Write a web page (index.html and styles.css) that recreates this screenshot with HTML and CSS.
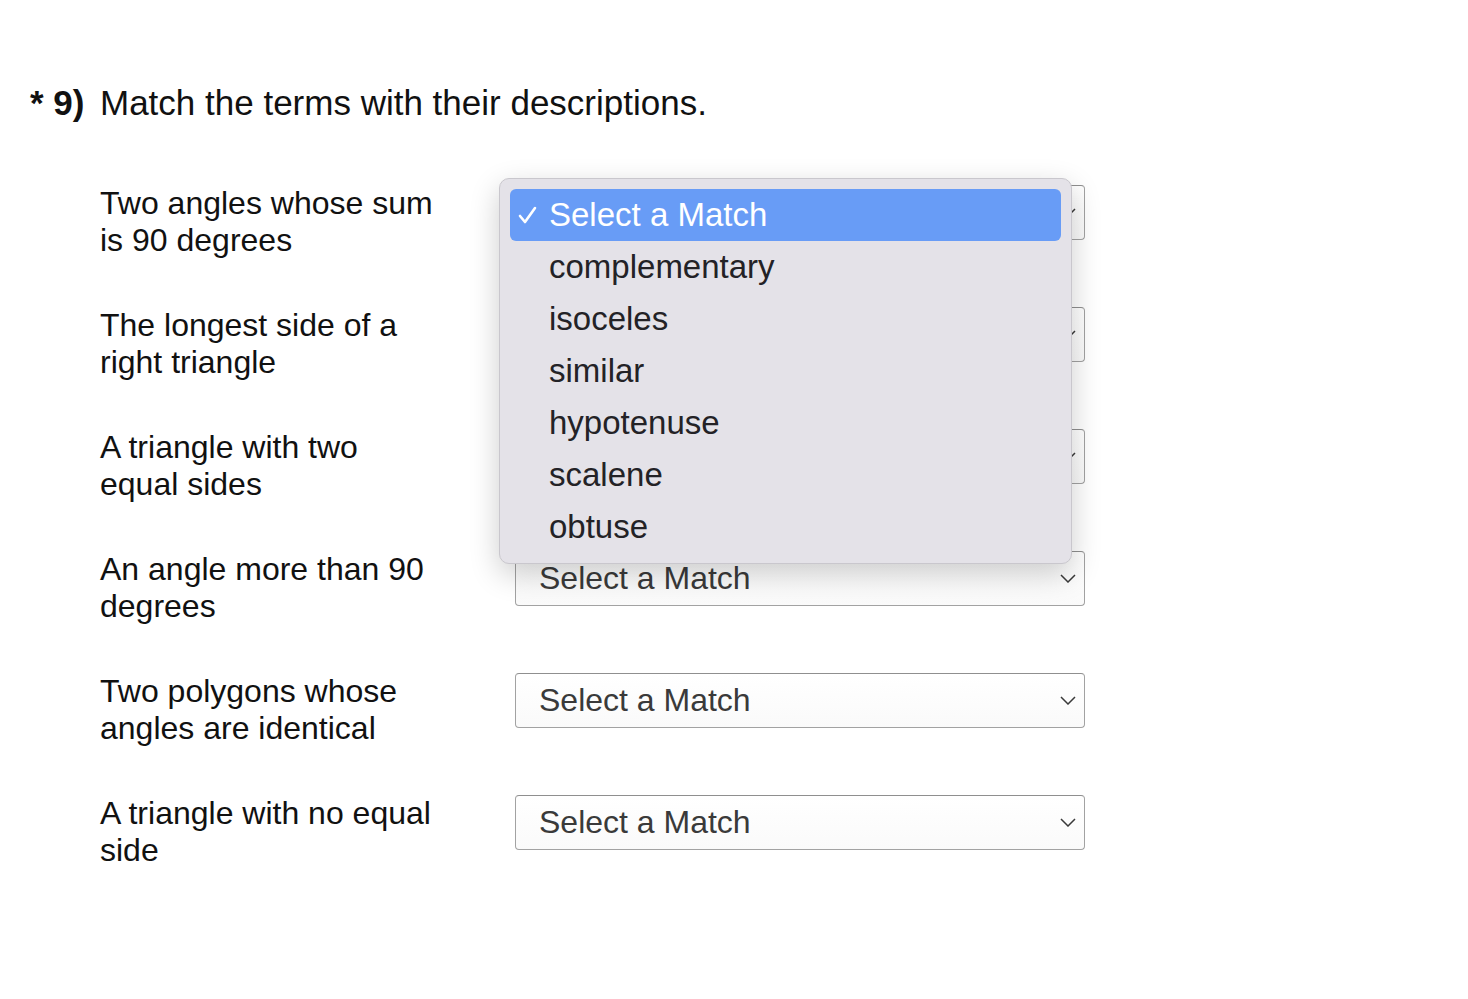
FILE: index.html
```html
<!DOCTYPE html>
<html lang="en">
<head>
  <meta charset="UTF-8">
  <title>Question 9</title>
  <link rel="stylesheet" href="styles.css">
</head>
<body>
  <div class="question">
    <h2 class="question-title">
      <span class="q-num">* 9)</span>
      <span>Match the terms with their descriptions.</span>
    </h2>

    <div class="matches">
      <div class="match-row">
        <div class="match-term">Two angles whose sum is 90 degrees</div>
        <div class="select-wrap">
          <div class="select">
            <span>Select a Match</span>
            <svg class="chevron" width="16" height="9" viewBox="0 0 16 9"><polyline points="1,1 8,8 15,1" /></svg>
          </div>
          <!-- open menu -->
          <ul class="dropdown">
            <li class="option selected">
              <svg class="check" width="20" height="18" viewBox="0 0 20 18"><polyline points="2,10 7,16 17,2" /></svg>
              Select a Match
            </li>
            <li class="option">complementary</li>
            <li class="option">isoceles</li>
            <li class="option">similar</li>
            <li class="option">hypotenuse</li>
            <li class="option">scalene</li>
            <li class="option">obtuse</li>
          </ul>
        </div>
      </div>

      <div class="match-row">
        <div class="match-term">The longest side of a right triangle</div>
        <div class="select-wrap">
          <div class="select">
            <span>Select a Match</span>
            <svg class="chevron" width="16" height="9" viewBox="0 0 16 9"><polyline points="1,1 8,8 15,1" /></svg>
          </div>
        </div>
      </div>

      <div class="match-row">
        <div class="match-term">A triangle with two equal sides</div>
        <div class="select-wrap">
          <div class="select">
            <span>Select a Match</span>
            <svg class="chevron" width="16" height="9" viewBox="0 0 16 9"><polyline points="1,1 8,8 15,1" /></svg>
          </div>
        </div>
      </div>

      <div class="match-row">
        <div class="match-term">An angle more than 90 degrees</div>
        <div class="select-wrap">
          <div class="select">
            <span>Select a Match</span>
            <svg class="chevron" width="16" height="9" viewBox="0 0 16 9"><polyline points="1,1 8,8 15,1" /></svg>
          </div>
        </div>
      </div>

      <div class="match-row">
        <div class="match-term">Two polygons whose angles are identical</div>
        <div class="select-wrap">
          <div class="select">
            <span>Select a Match</span>
            <svg class="chevron" width="16" height="9" viewBox="0 0 16 9"><polyline points="1,1 8,8 15,1" /></svg>
          </div>
        </div>
      </div>

      <div class="match-row">
        <div class="match-term">A triangle with no equal side</div>
        <div class="select-wrap">
          <div class="select">
            <span>Select a Match</span>
            <svg class="chevron" width="16" height="9" viewBox="0 0 16 9"><polyline points="1,1 8,8 15,1" /></svg>
          </div>
        </div>
      </div>
    </div>
  </div>
</body>
</html>
```

FILE: styles.css
```css
body {
  margin: 0;
  background: #fff;
  font-family: "Liberation Sans", Arial, sans-serif;
  color: #111;
}
.question {
  padding: 83px 0 0 30px;
}
.question-title {
  display: flex;
  margin: 0 0 62px 0;
  font-size: 35px;
  line-height: 40px;
  font-weight: normal;
}
.q-num {
  width: 70px;
  font-weight: bold;
}
.matches {
  display: flex;
  flex-direction: column;
  gap: 48px;
  margin-left: 70px;
}
.match-row {
  display: grid;
  grid-template-columns: 340px 570px;
  column-gap: 75px;
  align-items: start;
}
.match-term {
  font-size: 32px;
  line-height: 37px;
  height: 74px;
}
.select-wrap {
  position: relative;
}
.select {
  display: flex;
  align-items: center;
  justify-content: space-between;
  height: 55px;
  box-sizing: border-box;
  padding: 0 8px 0 23px;
  border: 1px solid #a2a2a2;
  border-top-color: #8f8f8f;
  border-radius: 4px;
  background: linear-gradient(#fff, #fafafa);
  font-size: 32px;
  color: #3a3a3a;
}
.chevron polyline {
  fill: none;
  stroke: #3a3a3a;
  stroke-width: 1.5;
}
.dropdown {
  position: absolute;
  left: -16px;
  top: -7px;
  width: 573px;
  box-sizing: border-box;
  margin: 0;
  padding: 10px;
  list-style: none;
  background: #e4e2e8;
  border: 1px solid #c9c7cd;
  border-radius: 10px;
  box-shadow: 0 10px 30px rgba(0, 0, 0, 0.2);
  z-index: 10;
}
.option {
  position: relative;
  height: 52px;
  line-height: 52px;
  padding-left: 39px;
  font-size: 33px;
  color: #232226;
}
.option.selected {
  background: #689cf6;
  color: #fff;
  border-radius: 6px;
}
.check {
  position: absolute;
  left: 8px;
  top: 17px;
}
.check polyline {
  fill: none;
  stroke: #fff;
  stroke-width: 2.6;
  stroke-linecap: round;
  stroke-linejoin: round;
}
```
